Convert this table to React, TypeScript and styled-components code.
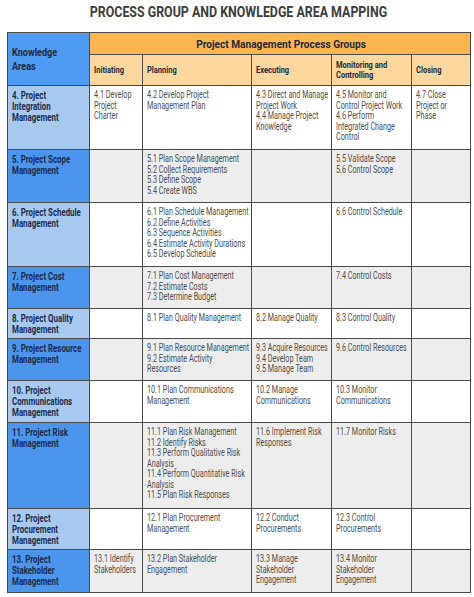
import React from 'react'
import styled, { createGlobalStyle } from 'styled-components'

const GlobalStyle = createGlobalStyle`
  html, body {
    margin: 0;
    padding: 0;
    background: #ffffff;
  }
  body {
    font-family: "Roboto", "Liberation Sans", sans-serif;
  }
`

const Page = styled.div`
  width: 474px;
  height: 597px;
  padding: 2px 0 0 7px;
  box-sizing: border-box;
  background: #fff;
`

const Title = styled.h1`
  margin: 0 0 10px;
  width: 463px;
  height: 20px;
  text-align: center;
  font-size: 15.5px;
  line-height: 20px;
  font-weight: 700;
  color: #3c3c3c;
  white-space: nowrap;
  transform: scaleX(0.8);
  transform-origin: center top;
`

const Table = styled.table`
  border-collapse: collapse;
  table-layout: fixed;
  width: 463px;
  border: 1px solid #4a4a4a;
`

const HeadCell = styled.th<{ $tone: 'blue' | 'orange' | 'peach' }>`
  border: 1px solid #4a4a4a;
  padding: 0 2px 0 4px;
  text-align: left;
  vertical-align: middle;
  font-weight: 700;
  color: #1f2a3a;
  background: ${({ $tone }) => ($tone === 'blue' ? '#4d9bf2' : $tone === 'orange' ? '#fbb64f' : '#fdd89e')};
  font-size: ${({ $tone }) => ($tone === 'peach' ? '9.5px' : '11.5px')};
  line-height: ${({ $tone }) => ($tone === 'peach' ? '10.5px' : '14px')};
`

const GroupTitle = styled(HeadCell)`
  text-align: center;
`

const AreaCell = styled.th<{ $bright: boolean }>`
  border: 1px solid #4a4a4a;
  padding: 4px 2px 0 4px;
  text-align: left;
  vertical-align: top;
  font-size: 10.5px;
  line-height: 11px;
  font-weight: 700;
  color: #1a2c4e;
  background: ${({ $bright }) => ($bright ? '#4b95ec' : '#a8c9ef')};
`

const Cell = styled.td<{ $shaded: boolean }>`
  border: 1px solid #4a4a4a;
  padding: 4px 2px 0 4px;
  vertical-align: top;
  font-size: 10.3px;
  line-height: 10.5px;
  color: #4e4e4e;
  background: ${({ $shaded }) => ($shaded ? '#ededed' : '#ffffff')};
`

// condensed look: the reference uses a narrow face, so squeeze each line
const Narrow = styled.span<{ $center?: boolean; $squeeze?: number }>`
  display: block;
  white-space: nowrap;
  transform: scaleX(${({ $squeeze }) => $squeeze ?? 0.7});
  transform-origin: ${({ $center }) => ($center ? 'center top' : 'left top')};
`

type Row = { area: string[]; height: number; cells: string[][] }

const rows: Row[] = [
  {
    area: ['4. Project', 'Integration', 'Management'],
    height: 64,
    cells: [
      ['4.1 Develop', 'Project', 'Charter'],
      ['4.2 Develop Project', 'Management Plan'],
      ['4.3 Direct and Manage', 'Project Work', '4.4 Manage Project', 'Knowledge'],
      ['4.5 Monitor and', 'Control Project Work', '4.6 Perform', 'Integrated Change', 'Control'],
      ['4.7 Close', 'Project or', 'Phase'],
    ],
  },
  {
    area: ['5. Project Scope', 'Management'],
    height: 53,
    cells: [
      [],
      ['5.1 Plan Scope Management', '5.2 Collect Requirements', '5.3 Define Scope', '5.4 Create WBS'],
      [],
      ['5.5 Validate Scope', '5.6 Control Scope'],
      [],
    ],
  },
  {
    area: ['6. Project Schedule', 'Management'],
    height: 64,
    cells: [
      [],
      [
        '6.1 Plan Schedule Management',
        '6.2 Define Activities',
        '6.3 Sequence Activities',
        '6.4 Estimate Activity Durations',
        '6.5 Develop Schedule',
      ],
      [],
      ['6.6 Control Schedule'],
      [],
    ],
  },
  {
    area: ['7. Project Cost', 'Management'],
    height: 42,
    cells: [[], ['7.1 Plan Cost Management', '7.2 Estimate Costs', '7.3 Determine Budget'], [], ['7.4 Control Costs'], []],
  },
  {
    area: ['8. Project Quality', 'Management'],
    height: 30,
    cells: [[], ['8.1 Plan Quality Management'], ['8.2 Manage Quality'], ['8.3 Control Quality'], []],
  },
  {
    area: ['9. Project Resource', 'Management'],
    height: 42,
    cells: [
      [],
      ['9.1 Plan Resource Management', '9.2 Estimate Activity', 'Resources'],
      ['9.3 Acquire Resources', '9.4 Develop Team', '9.5 Manage Team'],
      ['9.6 Control Resources'],
      [],
    ],
  },
  {
    area: ['10. Project', 'Communications', 'Management'],
    height: 42,
    cells: [
      [],
      ['10.1 Plan Communications', 'Management'],
      ['10.2 Manage', 'Communications'],
      ['10.3 Monitor', 'Communications'],
      [],
    ],
  },
  {
    area: ['11. Project Risk', 'Management'],
    height: 86,
    cells: [
      [],
      [
        '11.1 Plan Risk Management',
        '11.2 Identify Risks',
        '11.3 Perform Qualitative Risk',
        'Analysis',
        '11.4 Perform Quantitative Risk',
        'Analysis',
        '11.5 Plan Risk Responses',
      ],
      ['11.6 Implement Risk', 'Responses'],
      ['11.7 Monitor Risks'],
      [],
    ],
  },
  {
    area: ['12. Project', 'Procurement', 'Management'],
    height: 41,
    cells: [
      [],
      ['12.1 Plan Procurement', 'Management'],
      ['12.2 Conduct', 'Procurements'],
      ['12.3 Control', 'Procurements'],
      [],
    ],
  },
  {
    area: ['13. Project', 'Stakeholder', 'Management'],
    height: 43,
    cells: [
      ['13.1 Identify', 'Stakeholders'],
      ['13.2 Plan Stakeholder', 'Engagement'],
      ['13.3 Manage', 'Stakeholder', 'Engagement'],
      ['13.4 Monitor', 'Stakeholder', 'Engagement'],
      [],
    ],
  },
]

const widths = [82, 53, 109, 80, 80, 59]
const groups = [['Initiating'], ['Planning'], ['Executing'], ['Monitoring and', 'Controlling'], ['Closing']]

export default function App() {
  return (
    <>
      <GlobalStyle />
      <Page>
        <Title>PROCESS GROUP AND KNOWLEDGE AREA MAPPING</Title>
        <Table>
          <colgroup>
            {widths.map((w, i) => (
              <col key={i} style={{ width: w }} />
            ))}
          </colgroup>
          <thead>
            <tr style={{ height: 22 }}>
              <HeadCell $tone="blue" rowSpan={2}>
                <Narrow $squeeze={0.79}>Knowledge</Narrow>
                <Narrow $squeeze={0.79}>Areas</Narrow>
              </HeadCell>
              <GroupTitle $tone="orange" colSpan={5}>
                <Narrow $center $squeeze={0.88}>
                  Project Management Process Groups
                </Narrow>
              </GroupTitle>
            </tr>
            <tr style={{ height: 31 }}>
              {groups.map((g) => (
                <HeadCell key={g[0]} $tone="peach">
                  {g.map((l) => (
                    <Narrow key={l} $squeeze={0.79}>
                      {l}
                    </Narrow>
                  ))}
                </HeadCell>
              ))}
            </tr>
          </thead>
          <tbody>
            {rows.map((row, ri) => (
              <tr key={row.area[0]} style={{ height: row.height }}>
                <AreaCell $bright={ri % 2 === 1}>
                  {row.area.map((l) => (
                    <Narrow key={l} $squeeze={0.75}>
                      {l}
                    </Narrow>
                  ))}
                </AreaCell>
                {row.cells.map((lines, ci) => (
                  <Cell key={ci} $shaded={ri % 2 === 1}>
                    {lines.map((l, li) => (
                      <Narrow key={li}>{l}</Narrow>
                    ))}
                  </Cell>
                ))}
              </tr>
            ))}
          </tbody>
        </Table>
      </Page>
    </>
  )
}
